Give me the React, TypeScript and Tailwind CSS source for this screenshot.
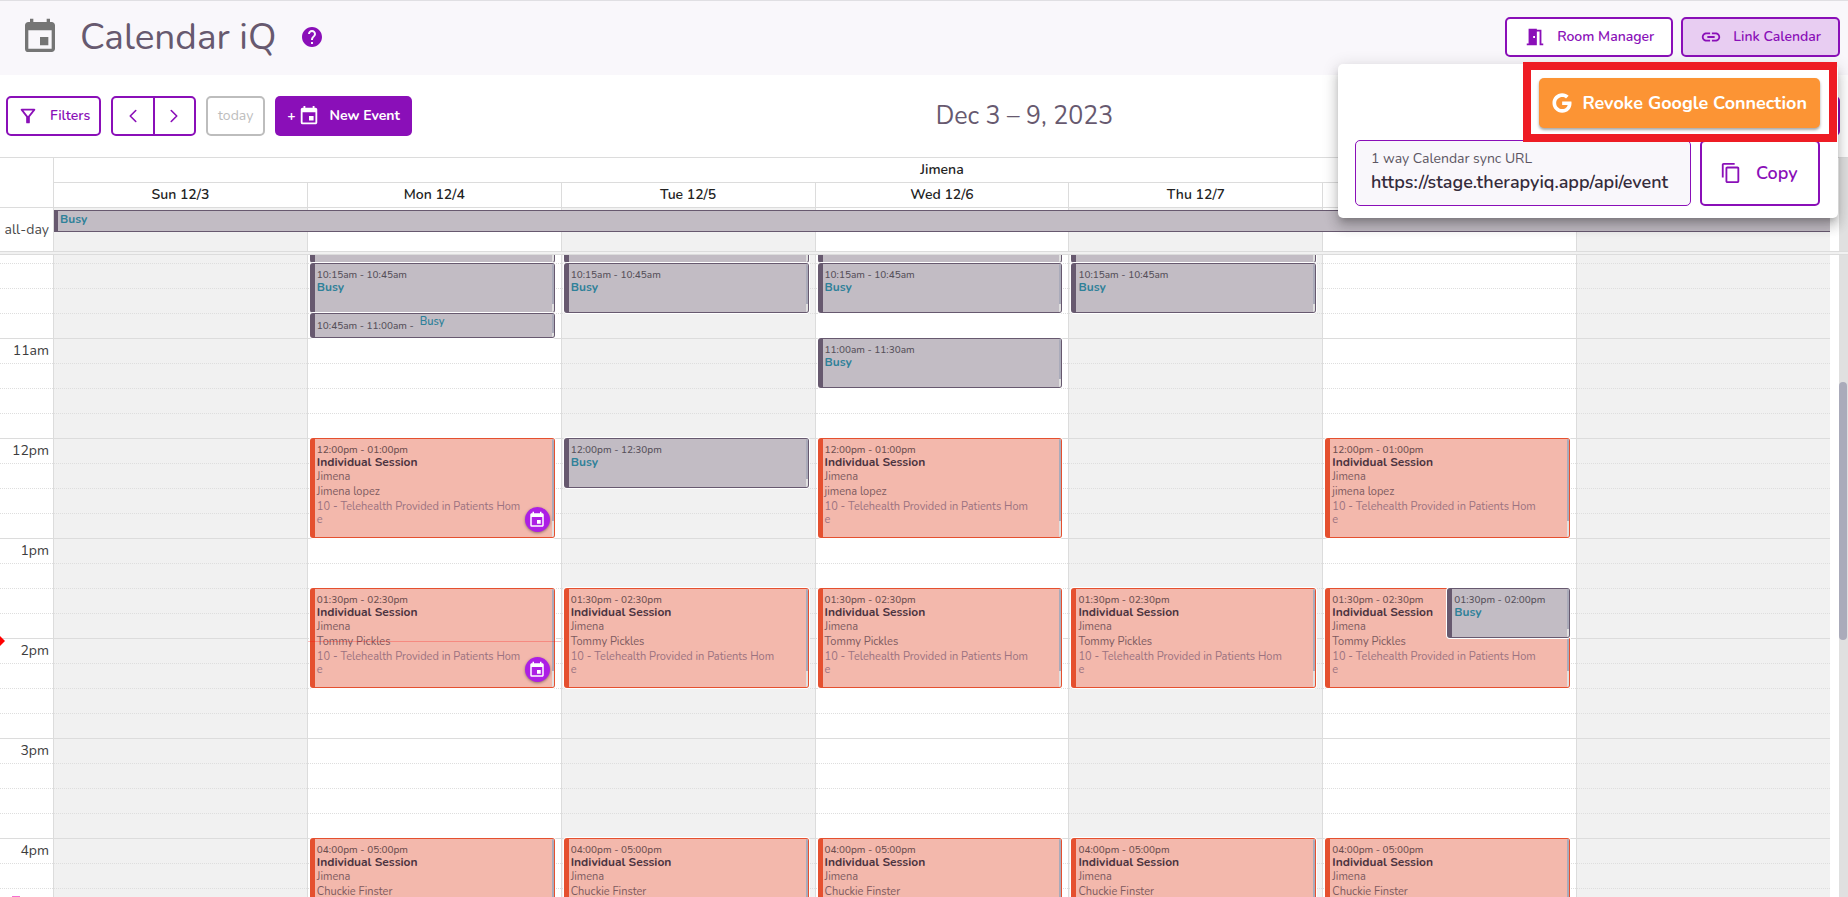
import type { ReactNode } from 'react';
import { ChevronLeft, ChevronRight } from 'lucide-react';
import { FaGoogle } from 'react-icons/fa';
import { MdContentCopy, MdEvent, MdHelp, MdLink, MdMeetingRoom, MdOutlineFilterAlt } from 'react-icons/md';

interface CalendarEvent {
  day: number;
  start: number; // minutes after 10am
  end: number;
  time?: string;
  client?: string;
  location?: string;
  synced?: boolean;
  half?: boolean;
}

const PX_PER_MINUTE = 100 / 60;
const TELEHEALTH = '10 - Telehealth Provided in Patients Home';

const days = ['Sun 12/3', 'Mon 12/4', 'Tue 12/5', 'Wed 12/6', 'Thu 12/7', 'Fri 12/8', 'Sat 12/9'];
const shadedDays = [0, 2, 4, 6];
const hours = ['', '11am', '12pm', '1pm', '2pm', '3pm', '4pm'];

const busyDays = [1, 2, 3, 4];
const sessionDays = [1, 2, 3, 4, 5];

const events: CalendarEvent[] = [
  ...busyDays.map((day) => ({ day, start: 0, end: 15 })),
  ...busyDays.map((day) => ({ day, start: 15, end: 45, time: '10:15am - 10:45am' })),
  { day: 1, start: 45, end: 60, time: '10:45am - 11:00am' },
  { day: 3, start: 60, end: 90, time: '11:00am - 11:30am' },
  { day: 1, start: 120, end: 180, time: '12:00pm - 01:00pm', client: 'Jimena lopez', location: TELEHEALTH, synced: true },
  { day: 2, start: 120, end: 150, time: '12:00pm - 12:30pm' },
  { day: 3, start: 120, end: 180, time: '12:00pm - 01:00pm', client: 'jimena lopez', location: TELEHEALTH },
  { day: 5, start: 120, end: 180, time: '12:00pm - 01:00pm', client: 'jimena lopez', location: TELEHEALTH },
  ...sessionDays.map((day) => ({
    day,
    start: 210,
    end: 270,
    time: '01:30pm - 02:30pm',
    client: 'Tommy Pickles',
    location: TELEHEALTH,
    synced: day === 1,
  })),
  { day: 5, start: 210, end: 240, time: '01:30pm - 02:00pm', half: true },
  ...sessionDays.map((day) => ({
    day,
    start: 360,
    end: 420,
    time: '04:00pm - 05:00pm',
    client: 'Chuckie Finster',
  })),
];

interface OutlineButtonProps {
  icon: ReactNode;
  label: string;
  className: string;
}

const OutlineButton = ({ icon, label, className }: OutlineButtonProps) => (
  <button
    type="button"
    className={`flex h-10 items-center gap-[11px] rounded-[5px] border-2 border-[#8a0fb8] text-sm font-semibold text-[#8a0fb8] ${className}`}
  >
    {icon}
    {label}
  </button>
);

const SyncPopover = () => (
  <div className="absolute top-[47px] right-0.5 z-30 w-[500px] rounded-[5px] bg-white pt-3.5 pr-[18px] pb-3 pl-[17px] shadow-[0_5px_6px_-3px_rgba(0,0,0,0.2),0_9px_12px_1px_rgba(0,0,0,0.14),0_3px_16px_2px_rgba(0,0,0,0.12)]">
    <div className="flex justify-end">
      <div className="relative z-10">
        <button
          type="button"
          className="flex h-[50px] items-center gap-2.5 rounded-[5px] bg-[#fc9434] px-[13px] text-lg font-bold text-white shadow-[0_2px_3px_rgba(0,0,0,0.35)]"
        >
          <FaGoogle size={20} />
          Revoke Google Connection
        </button>
        <div className="pointer-events-none absolute -top-4 -right-[17px] -bottom-3.5 -left-4 border-8 border-[#ee1c24]" />
      </div>
    </div>
    <div className="mt-3 flex gap-[9px]">
      <div className="flex min-w-0 flex-1 flex-col rounded-[5px] border border-[#8a0fb8] bg-[#f9f7fb] px-[15px] pt-2 pb-2.5">
        <label htmlFor="sync-url" className="text-sm leading-5 text-[#5c5662]">
          1 way Calendar sync URL
        </label>
        <input
          id="sync-url"
          readOnly
          value="https://stage.therapyiq.app/api/event"
          className="h-[26px] w-full bg-transparent text-lg font-semibold text-[#352c3b] outline-none"
        />
      </div>
      <button
        type="button"
        className="flex w-[120px] items-center gap-3.5 rounded-[5px] border-2 border-[#8a0fb8] bg-white pl-[18px] text-lg font-semibold text-[#8a0fb8]"
      >
        <MdContentCopy size={22} />
        Copy
      </button>
    </div>
  </div>
);

const PageHeader = () => (
  <header className="flex h-[75px] shrink-0 items-center justify-between border-t border-[#e0dfe3] bg-[#f9f7fb] pr-2 pb-0.5 pl-5">
    <div className="flex items-center">
      <MdEvent size={40} className="text-[#757575]" />
      <h1 className="ml-5 text-[37px] leading-10 text-[#67596f]">Calendar iQ</h1>
      <button type="button" aria-label="Help" className="ml-6 text-[#8a0fb8]">
        <MdHelp size={24} />
      </button>
    </div>
    <div className="relative flex gap-2">
      <OutlineButton icon={<MdMeetingRoom size={22} />} label="Room Manager" className="bg-white px-[17px]" />
      <OutlineButton icon={<MdLink size={22} />} label="Link Calendar" className="bg-[#e8cdf2] px-[17px]" />
      <SyncPopover />
    </div>
  </header>
);

const Toolbar = () => (
  <div className="flex h-[82px] shrink-0 items-center justify-between pr-2 pl-1.5">
    <div className="flex items-center gap-2.5">
      <OutlineButton icon={<MdOutlineFilterAlt size={22} />} label="Filters" className="bg-white px-[9px]" />
      <div className="flex h-10 w-[85px] divide-x-2 divide-[#8a0fb8] rounded-[5px] border-2 border-[#8a0fb8] text-[#8a0fb8]">
        <button type="button" aria-label="Previous week" className="flex flex-1 items-center justify-center">
          <ChevronLeft size={22} strokeWidth={1.75} />
        </button>
        <button type="button" aria-label="Next week" className="flex flex-1 items-center justify-center">
          <ChevronRight size={22} strokeWidth={1.75} />
        </button>
      </div>
      <button type="button" disabled className="h-10 w-[59px] rounded-[5px] border-2 border-[#bdbdbd] text-sm text-[#bdbdbd]">
        today
      </button>
      <button
        type="button"
        className="flex h-10 items-center rounded-[5px] bg-[#8a0fb8] px-3 text-sm font-bold text-white"
      >
        +
        <MdEvent size={22} className="mr-2.5 ml-0.5" />
        New Event
      </button>
    </div>
    <h2 className="text-[25px] leading-8 text-[#67596f]">Dec 3 – 9, 2023</h2>
    <button type="button" aria-label="Change view" className="h-10 w-[203px] rounded-[5px] bg-[#8a0fb8]" />
  </div>
);

const EventDetails = ({ event }: { event: CalendarEvent }) => {
  if (!event.client) {
    return <div className="text-xs leading-[13px] font-bold text-[#2f8199]">Busy</div>;
  }

  return (
    <>
      <div className="text-xs leading-[13px] font-bold text-[#4b3340]">Individual Session</div>
      <div className="leading-[15px] text-[#7d5a5f]">Jimena</div>
      <div className="leading-[15px] text-[#7d5a5f]">{event.client}</div>
      {event.location && (
        <div className="w-[206px] pt-px leading-[13px] break-all whitespace-normal text-[#9b7280]">{event.location}</div>
      )}
    </>
  );
};

const EventCard = ({ event }: { event: CalendarEvent }) => {
  const height = (event.end - event.start) * PX_PER_MINUTE;
  const colors = event.client ? 'border-[#e5502f] bg-[#f3b8ac]' : 'border-[#67596f] bg-[#c2bcc4]';
  const short = event.end - event.start <= 15;

  return (
    <div
      className={`absolute right-1.5 flex overflow-hidden rounded-[3px] border border-l-[5px] pl-0.5 text-[11px] shadow-[0_0_0_1px_#fff] ${colors} ${event.half ? 'left-[49%]' : 'left-0.5'}`}
      style={{ top: event.start * PX_PER_MINUTE, height }}
    >
      {short ? (
        <div className="flex flex-1 gap-1.5 whitespace-nowrap">
          {event.time && (
            <>
              <span className="pt-1 text-[10px] leading-4 font-medium text-[#56505a]">{event.time} -</span>
              <span className="leading-4 font-semibold text-[#2f8199]">Busy</span>
            </>
          )}
        </div>
      ) : (
        <div className="min-w-0 flex-1 pt-[5px] whitespace-nowrap">
          <div className={`text-[10px] leading-3 font-medium ${event.client ? 'text-[#6e4f50]' : 'text-[#56505a]'}`}>
            {event.time}
          </div>
          <EventDetails event={event} />
        </div>
      )}
      {/* Inner scroll track */}
      <div className="flex w-0.5 flex-col bg-[#e0e0e0]">
        {event.time && <div className="h-5/6 bg-[#aaabba]" />}
      </div>
      {event.synced && (
        <span className="absolute right-1 bottom-[5px] flex size-[25px] items-center justify-center rounded-full bg-[#ad1ee5] text-white shadow-[0_1px_3px_rgba(0,0,0,0.4)]">
          <MdEvent size={18} />
        </span>
      )}
    </div>
  );
};

const HourSlots = () => (
  <div className="h-[100px] border-t border-[#dcdcdc]">
    <div className="h-6" />
    <div className="h-[25px] border-t border-dotted border-[#dedede]" />
    <div className="h-[25px] border-t border-dotted border-[#dedede]" />
    <div className="h-[25px] border-t border-dotted border-[#dedede]" />
  </div>
);

const CalendarHead = () => (
  <div className="flex shrink-0 border-t border-[#dcdcdc] text-sm">
    <div className="flex min-w-0 flex-1">
      <div className="flex w-[53px] shrink-0 flex-col">
        <div className="h-[50px] border-b border-[#dcdcdc]" />
        <div className="flex h-[43px] items-center justify-end pr-1 text-[#4a4a4a]">all-day</div>
      </div>
      <div className="min-w-0 flex-1">
        <div className="h-[25px] border-b border-l border-[#dcdcdc] text-center leading-6 font-semibold text-[#222]">
          Jimena
        </div>
        <div className="flex h-[25px] border-b border-[#dcdcdc]">
          {days.map((day) => (
            <div key={day} className="flex-1 border-l border-[#dcdcdc] text-center leading-6 font-semibold text-[#222]">
              {day}
            </div>
          ))}
        </div>
        <div className="relative flex h-[43px]">
          {days.map((day, i) => (
            <div
              key={day}
              className={`flex-1 border-l border-[#dcdcdc] ${shadedDays.includes(i) ? 'bg-[#f1f1f1]' : 'bg-white'}`}
            />
          ))}
          <div className="absolute top-0.5 right-0 left-px h-[22px] border-y border-l-4 border-[#67596f] bg-[#c2bcc4] pl-0.5 text-xs leading-[17px] font-bold text-[#2f8199]">
            Busy
          </div>
        </div>
      </div>
    </div>
    <div className="ml-[9px] w-[9px] bg-[#e0e0e0]" />
  </div>
);

const CalendarBody = () => (
  <div className="flex min-h-0 flex-1 overflow-hidden">
    <div className="-mt-[17px] flex h-[700px] min-w-0 flex-1">
      <div className="relative w-[53px] shrink-0 text-sm text-[#3c3c3c]">
        {hours.map((hour) => (
          <div key={hour} className="relative">
            <HourSlots />
            <span className="absolute top-[3px] right-1 leading-5">{hour}</span>
          </div>
        ))}
        <div className="absolute top-[398px] left-0 border-y-[5px] border-l-[5px] border-y-transparent border-l-[#f00]" />
      </div>
      {days.map((day, i) => (
        <div
          key={day}
          className={`relative min-w-0 flex-1 border-l border-[#dcdcdc] ${shadedDays.includes(i) ? 'bg-[#f1f1f1]' : 'bg-white'}`}
        >
          {hours.map((hour) => (
            <HourSlots key={hour} />
          ))}
          {events
            .filter((event) => event.day === i)
            .map((event) => (
              <EventCard key={`${event.start}-${event.end}`} event={event} />
            ))}
          {i === 1 && <div className="absolute inset-x-0 top-[403px] h-px bg-[#f00]/25" />}
        </div>
      ))}
    </div>
    <div className="ml-[9px] w-[9px] bg-[#e0e0e0] pt-[127px]">
      <div className="h-[258px] w-2 rounded-full bg-[#aaabba]" />
    </div>
  </div>
);

export default function App() {
  return (
    <div className="relative flex h-screen flex-col overflow-hidden bg-white font-['Nunito','Open_Sans',sans-serif]">
      <PageHeader />
      <Toolbar />
      <CalendarHead />
      <div className="h-1 shrink-0 border-y border-[#dcdcdc] bg-[#f1f1f1]" />
      <CalendarBody />
      <div className="absolute bottom-0 left-3 h-px w-2 bg-[#f66fd0]" />
    </div>
  );
}
